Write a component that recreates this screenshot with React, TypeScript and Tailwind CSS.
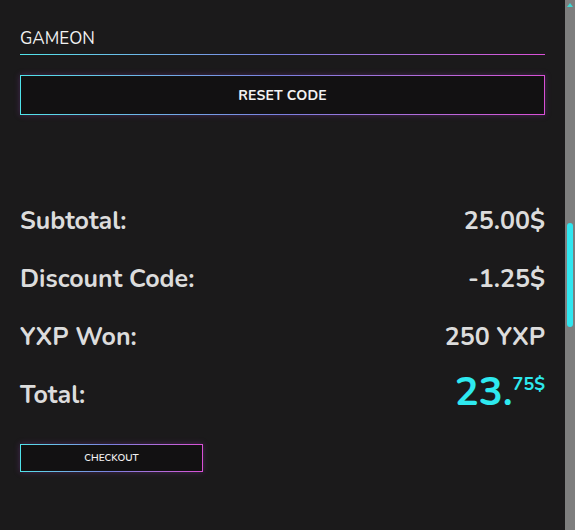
import React from 'react'

const font = { fontFamily: '"Nunito", "Lato", "Open Sans", sans-serif' }

function GradientBox({ className = '', children }: { className?: string; children: React.ReactNode }) {
  return (
    <div className={`bg-gradient-to-r from-[#4fe3ea] via-[#7a7fe0] to-[#d94fd6] p-px shadow-[0_0_6px_rgba(150,60,180,0.35)] ${className}`}>
      <div className="h-full w-full bg-[#121112] flex items-center justify-center">{children}</div>
    </div>
  )
}

function Row({ label, children }: { label: string; children: React.ReactNode }) {
  return (
    <div className="h-[58px] flex items-center justify-between">
      <span className="text-[25px] font-bold text-[#dcdcdc]">{label}</span>
      {children}
    </div>
  )
}

export default function App() {
  return (
    <div className="w-[575px] h-[530px] bg-[#1b1a1b] flex overflow-hidden" style={font}>
      <div className="flex-1 flex flex-col pl-5 pr-5">
        <div className="mt-[24px] h-[31px] flex flex-col">
          <div className="flex-1 flex items-center text-[17px] text-[#f2f2f2] leading-none pb-[2px]">GAMEON</div>
          <div className="h-px bg-gradient-to-r from-[#4fe3ea] via-[#7a7fe0] to-[#d94fd6]" />
        </div>

        <GradientBox className="mt-[20px] h-[40px]">
          <span className="text-[14px] font-bold text-[#f2f2f2] tracking-[0.2px]">RESET CODE</span>
        </GradientBox>

        <div className="mt-[78px] flex flex-col">
          <Row label="Subtotal:">
            <span className="text-[25px] font-bold text-[#dcdcdc]">25.00$</span>
          </Row>
          <Row label="Discount Code:">
            <span className="text-[25px] font-bold text-[#dcdcdc]">-1.25$</span>
          </Row>
          <Row label="YXP Won:">
            <span className="text-[25px] font-bold text-[#dcdcdc]">250 YXP</span>
          </Row>
          <Row label="Total:">
            <span className="flex items-start text-[#2ee9ef] font-bold leading-none -mt-[8px]">
              <span className="text-[40px] leading-none">23.</span>
              <span className="text-[18px] leading-none mt-[3px]">75$</span>
            </span>
          </Row>
        </div>

        <GradientBox className="mt-[19px] w-[183px] h-[28px]">
          <span className="text-[10px] font-semibold text-[#f2f2f2]">CHECKOUT</span>
        </GradientBox>
      </div>

      <div className="w-[10px] bg-[#7e7e7e] flex flex-col items-center">
        <div className="mt-[3px] w-0 h-0 border-l-[3px] border-r-[3px] border-b-[4px] border-l-transparent border-r-transparent border-b-[#3fd8d4]" />
        <div className="mt-[216px] w-[6px] h-[104px] rounded-full bg-[#2fe6f0]" />
      </div>
    </div>
  )
}
